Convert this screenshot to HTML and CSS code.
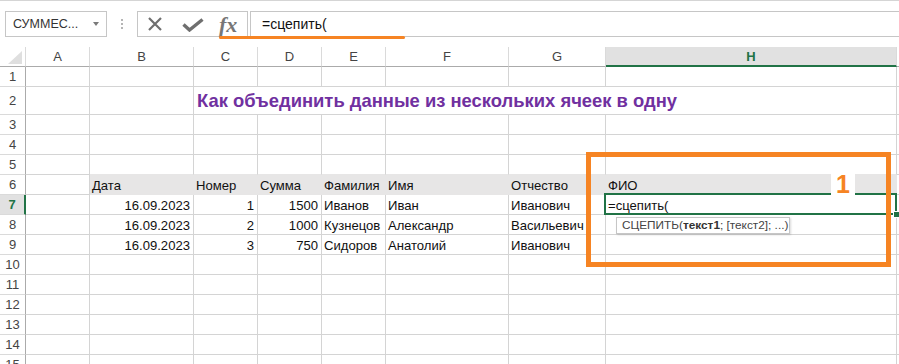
FILE: index.html
```html
<!DOCTYPE html>
<html lang="ru">
<head>
  <meta charset="UTF-8">
  <meta name="viewport" content="width=device-width, initial-scale=1.0">
  <title>Сцепить</title>
  <link rel="stylesheet" href="styles.css">
</head>
<body>
  <div class="topbar">
    <div class="namebox"><span>СУММЕС...</span><span class="caret"></span></div>
    <div class="grip"><i></i><i></i><i></i></div>
    <div class="fbtns">
      <svg class="ico-x" width="14" height="14" viewBox="0 0 14 14"><path d="M1 1 L13 13 M13 1 L1 13" stroke="#6f6f6f" stroke-width="2.2" fill="none"/></svg>
      <svg class="ico-ok" width="22" height="14" viewBox="0 0 22 14"><polyline points="1.5,6.5 7.5,12 20.5,1.5" stroke="#6f6f6f" stroke-width="3.4" fill="none"/></svg>
      <span class="fx">fx</span>
    </div>
    <div class="formula">=сцепить(</div>
  </div>

  <div class="sheet" id="sheet"></div>

  <!-- пометки поверх листа -->
  <div class="underline"></div>
  <div class="frame"></div>
  <div class="step">1</div>
  <div class="hint">СЦЕПИТЬ(<b>текст1</b>; [текст2]; ...)</div>

  <script>
    const sheet = document.getElementById("sheet");

    function cell(cls, text) {
      const d = document.createElement("div");
      d.className = "c " + (cls || "");
      if (text) d.textContent = text;
      sheet.appendChild(d);
      return d;
    }

    const data = {
      6: ["", "Дата", "Номер", "Сумма", "Фамилия", "Имя", "Отчество", "ФИО", ""],
      7: ["", "16.09.2023", "1", "1500", "Иванов", "Иван", "Иванович", "=сцепить(", ""],
      8: ["", "16.09.2023", "2", "1000", "Кузнецов", "Александр", "Васильевич", "", ""],
      9: ["", "16.09.2023", "3", "750", "Сидоров", "Анатолий", "Иванович", "", ""]
    };

    // заголовки столбцов
    cell("corner");
    ["A", "B", "C", "D", "E", "F", "G", "H", ""].forEach(l => {
      cell("colh" + (l === "H" ? " sel" : ""), l);
    });

    for (let r = 1; r <= 15; r++) {
      cell("rowh" + (r === 7 ? " sel" : ""), String(r));
      if (r === 2) {
        cell(); cell();
        cell("title", "Как объединить данные из нескольких ячеек в одну");
        cell();
        continue;
      }
      for (let i = 0; i < 9; i++) {
        let cls = "";
        if (r === 5 && i >= 1 && i <= 7) cls = "above-band";
        if (r === 6 && i >= 1 && i <= 7) cls = "band";
        if (r >= 7 && r <= 9 && i >= 1 && i <= 3) cls = "num";
        if (r === 7 && i === 7) cls = "active";
        cell(cls, data[r] ? data[r][i] : "");
      }
    }
  </script>
</body>
</html>
```

FILE: styles.css
```css
body {
  margin: 0;
  height: 364px;
  overflow: hidden;
  position: relative;
  background: #fff;
  font-family: "Liberation Sans", Arial, sans-serif;
  color: #111;
}

/* строка формул */
.topbar {
  display: flex;
  height: 26px;
  padding: 10px 0;
  border-top: 1px solid #d5d5d5;
}
.namebox {
  margin-left: 5px;
  width: 102px;
  box-sizing: border-box;
  border: 1px solid #c6c6c6;
  display: flex;
  align-items: center;
  justify-content: space-between;
  padding: 0 7px 0 7px;
  font-size: 12.5px;
  color: #333;
}
.caret {
  width: 0; height: 0;
  border-left: 3px solid transparent;
  border-right: 3px solid transparent;
  border-top: 4px solid #7a7a7a;
}
.grip {
  width: 30px;
  display: flex;
  flex-direction: column;
  align-items: center;
  justify-content: center;
  gap: 2px;
}
.grip i {
  width: 2px; height: 2px;
  background: #b5b5b5;
}
.fbtns {
  width: 111px;
  box-sizing: border-box;
  border: 1px solid #c6c6c6;
  display: flex;
  align-items: center;
}
.ico-x { margin-left: 10px; }
.ico-ok { margin-left: 20px; margin-top: 2px; }
.fx {
  margin-left: 15px;
  margin-top: 2px;
  font-family: "Liberation Serif", serif;
  font-style: italic;
  font-weight: bold;
  font-size: 22px;
  color: #777;
  line-height: 1;
}
.formula {
  flex: 1;
  margin-left: 2px;
  border: 1px solid #c6c6c6;
  border-right: none;
  padding-left: 11px;
  display: flex;
  align-items: center;
  font-size: 14px;
  color: #111;
}

/* лист */
.sheet {
  display: grid;
  grid-template-columns: 26px 64px 104px 64px 64px 64px 123px 97px 291px 1fr;
  grid-template-rows: 20px 20px 28px repeat(13, 20px);
}
.c {
  box-sizing: border-box;
  border-right: 1px solid #d4d4d4;
  border-bottom: 1px solid #d4d4d4;
  padding: 0 3px 1px 2px;
  display: flex;
  align-items: flex-end;
  white-space: nowrap;
  font-size: 13.1px;
}
.num { justify-content: flex-end; }
.title {
  grid-column: span 6;
  font-size: 18.4px;
  font-weight: bold;
  color: #7030a0;
  padding-left: 3px;
  padding-bottom: 2px;
}
.band {
  background: #e7e6e6;
  border-right-color: #e7e6e6;
  border-bottom-color: #e7e6e6;
}
.above-band { border-bottom-color: #e7e6e6; }

.corner, .colh, .rowh {
  align-items: center;
  justify-content: center;
  padding: 0;
  font-size: 13px;
  color: #444;
}
.corner, .colh {
  border-right-color: #dadada;
  border-bottom-color: #ababab;
}
.corner { position: relative; }
.corner::after {
  content: "";
  position: absolute;
  right: 3px; bottom: 2px;
  border-left: 14px solid transparent;
  border-bottom: 13px solid #dfdfdf;
}
.rowh {
  border-right-color: #ababab;
  border-bottom-color: #dadada;
}
.colh.sel {
  background: #e1e1e1;
  color: #217346;
  font-weight: bold;
  border-bottom: 2px solid #217346;
}
.rowh.sel {
  background: #e1e1e1;
  color: #217346;
  font-weight: bold;
  border-right: 2px solid #217346;
}

.active { position: relative; }
.active::after {
  content: "";
  position: absolute;
  top: -2px; left: -2px; right: -1px; bottom: -1px;
  border: 2px solid #217346;
  z-index: 2;
}
.active::before {
  content: "";
  position: absolute;
  right: -4px; bottom: -4px;
  width: 5px; height: 5px;
  background: #217346;
  border: 1px solid #fff;
  z-index: 3;
}

/* пометки */
.underline {
  position: absolute;
  left: 219px; top: 36px;
  width: 186px; height: 3px;
  background: #f68423;
  border-radius: 2px;
}
.frame {
  position: absolute;
  left: 586px; top: 152px;
  width: 305px; height: 115px;
  box-sizing: border-box;
  border: 5px solid #f68423;
  z-index: 4;
}
.step {
  position: absolute;
  left: 831px; top: 173px;
  width: 24px; height: 22px;
  background: #fff;
  color: #f68423;
  font-size: 25px;
  font-weight: bold;
  line-height: 22px;
  text-align: center;
  z-index: 5;
}
.hint {
  position: absolute;
  left: 616px; top: 217px;
  width: 174px; height: 17px;
  box-sizing: border-box;
  border: 1px solid #c6c6c6;
  box-shadow: 1px 1px 2px rgba(0,0,0,0.15);
  background: #fff;
  padding-left: 5px;
  font-size: 11.8px;
  line-height: 15px;
  color: #444;
  white-space: nowrap;
  z-index: 5;
}
.hint b { color: #333; }
```
